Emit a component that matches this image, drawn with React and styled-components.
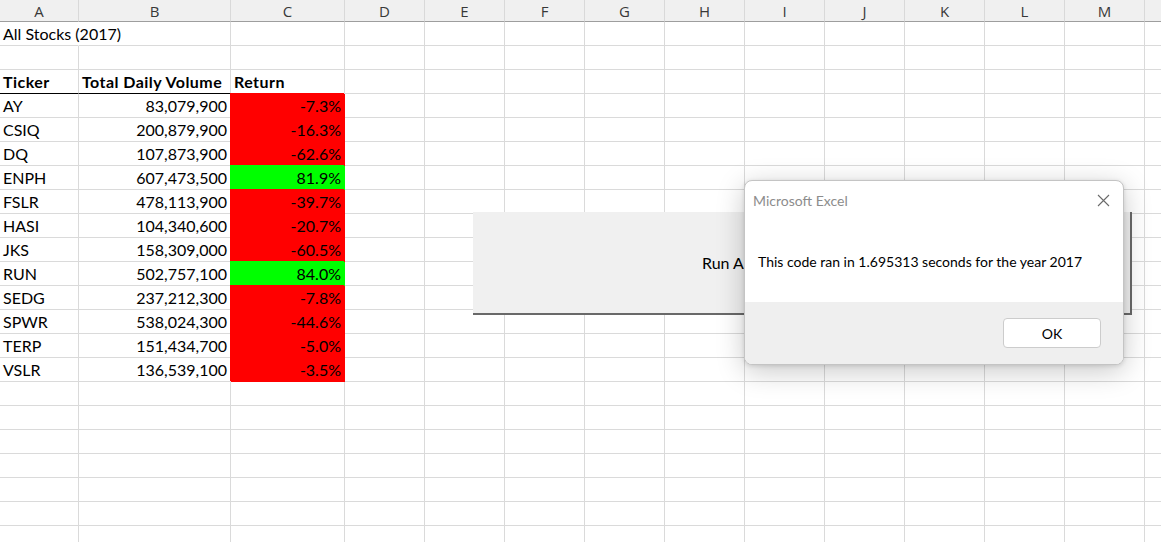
import React from 'react';
import styled, { createGlobalStyle } from 'styled-components';

const GlobalStyle = createGlobalStyle`
  html, body {
    margin: 0;
    padding: 0;
    background: #ffffff;
  }
  body {
    font-family: 'Lato', 'Liberation Sans', sans-serif;
  }
`;

// column widths include the 1px grid line on the right
const COLS = [
  { name: 'A', width: 79 },
  { name: 'B', width: 152 },
  { name: 'C', width: 114 },
  { name: 'D', width: 80 },
  { name: 'E', width: 80 },
  { name: 'F', width: 80 },
  { name: 'G', width: 80 },
  { name: 'H', width: 80 },
  { name: 'I', width: 80 },
  { name: 'J', width: 80 },
  { name: 'K', width: 80 },
  { name: 'L', width: 80 },
  { name: 'M', width: 80 },
  { name: '', width: 40 },
];

const RED = '#ff0000';
const GREEN = '#00ff00';

const stocks = [
  { ticker: 'AY', volume: '83,079,900', ret: '-7.3%' },
  { ticker: 'CSIQ', volume: '200,879,900', ret: '-16.3%' },
  { ticker: 'DQ', volume: '107,873,900', ret: '-62.6%' },
  { ticker: 'ENPH', volume: '607,473,500', ret: '81.9%' },
  { ticker: 'FSLR', volume: '478,113,900', ret: '-39.7%' },
  { ticker: 'HASI', volume: '104,340,600', ret: '-20.7%' },
  { ticker: 'JKS', volume: '158,309,000', ret: '-60.5%' },
  { ticker: 'RUN', volume: '502,757,100', ret: '84.0%' },
  { ticker: 'SEDG', volume: '237,212,300', ret: '-7.8%' },
  { ticker: 'SPWR', volume: '538,024,300', ret: '-44.6%' },
  { ticker: 'TERP', volume: '151,434,700', ret: '-5.0%' },
  { ticker: 'VSLR', volume: '136,539,100', ret: '-3.5%' },
];

const Page = styled.div`
  position: relative;
  width: 1161px;
  height: 542px;
  overflow: hidden;
  background: #ffffff;
`;

const Sheet = styled.div`
  display: grid;
  grid-template-columns: ${COLS.map((c) => `${c.width}px`).join(' ')};
  grid-auto-rows: 24px;
  grid-template-rows: 22px;
`;

const ColHeader = styled.div`
  background: #f0f0f0;
  border-right: 1px solid #d9d9d9;
  border-bottom: 1px solid #9e9e9e;
  display: flex;
  align-items: center;
  justify-content: center;
  font-family: 'Open Sans', 'Liberation Sans', sans-serif;
  font-size: 15px;
  line-height: 20px;
  color: #383838;
`;

const Cell = styled.div`
  position: relative;
  border-right: 1px solid ${(p) => (p.$fill ? p.$fill : p.$noRight ? 'transparent' : '#dadada')};
  border-bottom: 1px solid ${(p) => (p.$fill ? p.$fill : p.$underline ? '#000000' : '#dadada')};
  background: ${(p) => p.$fill || 'transparent'};
  box-shadow: ${(p) => (p.$fill ? `-1px -1px 0 0 ${p.$fill}` : 'none')};
  display: flex;
  align-items: flex-end;
  justify-content: ${(p) => (p.$align === 'right' ? 'flex-end' : 'flex-start')};
  padding: 0 3px 2px 3px;
  box-sizing: border-box;
  font-size: 16px;
  font-weight: ${(p) => (p.$bold ? 700 : 400)};
  letter-spacing: ${(p) => (p.$bold ? '0.45px' : '0')};
  color: #000000;
  white-space: nowrap;
  overflow: visible;
  z-index: ${(p) => (p.$fill ? 1 : 0)};
`;

const ShapeButton = styled.div`
  position: absolute;
  left: 473px;
  top: 212px;
  width: 659px;
  height: 103px;
  box-sizing: border-box;
  background: #f0f0f0;
  border-right: 2px solid #696969;
  border-bottom: 2px solid #696969;
  display: flex;
  align-items: center;
  padding-left: 229px;
  font-family: 'Lato', 'Liberation Sans', sans-serif;
  font-size: 16px;
  color: #000000;
  white-space: nowrap;
  overflow: hidden;
  z-index: 2;
`;

const Dialog = styled.div`
  position: absolute;
  left: 744px;
  top: 180px;
  width: 380px;
  height: 185px;
  box-sizing: border-box;
  border: 1px solid #c4c4c4;
  border-radius: 8px;
  background: #ffffff;
  box-shadow: 0 6px 28px rgba(0, 0, 0, 0.22), 0 1px 4px rgba(0, 0, 0, 0.12);
  display: flex;
  flex-direction: column;
  overflow: hidden;
  z-index: 3;
  font-family: 'Lato', 'Liberation Sans', sans-serif;
`;

const TitleBar = styled.div`
  height: 39px;
  display: flex;
  align-items: center;
  justify-content: space-between;
  padding: 0 12px 0 8px;
`;

const Title = styled.span`
  font-size: 14px;
  color: #8c8c8c;
  margin-top: -1px;
`;

const CloseButton = styled.button`
  width: 16px;
  height: 16px;
  padding: 0;
  border: none;
  background: none;
  display: flex;
  align-items: center;
  justify-content: center;
  cursor: pointer;
`;

const Body = styled.div`
  flex: 1;
  display: flex;
  align-items: center;
  padding-left: 13px;
  font-size: 14px;
  color: #000000;
`;

const Footer = styled.div`
  height: 62px;
  background: #efefef;
  display: flex;
  align-items: center;
  justify-content: flex-end;
  padding-right: 22px;
`;

const OkButton = styled.button`
  width: 98px;
  height: 30px;
  box-sizing: border-box;
  border: 1px solid #cccccc;
  border-radius: 4px;
  background: #ffffff;
  font-family: 'Lato', 'Liberation Sans', sans-serif;
  font-size: 14px;
  color: #000000;
  cursor: pointer;
`;

const TOTAL_ROWS = 22;

const buildRow = (index) => {
  if (index === 0) return { cells: { 0: { text: 'All Stocks (2017)', noRight: true } } };
  if (index === 2)
    return {
      cells: {
        0: { text: 'Ticker', bold: true, underline: true },
        1: { text: 'Total Daily Volume', bold: true, underline: true },
        2: { text: 'Return', bold: true },
      },
    };
  const stock = stocks[index - 3];
  if (stock) {
    const positive = !stock.ret.startsWith('-');
    return {
      cells: {
        0: { text: stock.ticker },
        1: { text: stock.volume, align: 'right' },
        2: { text: stock.ret, align: 'right', fill: positive ? GREEN : RED },
      },
    };
  }
  return { cells: {} };
};

const App = () => {
  const rows = Array.from({ length: TOTAL_ROWS }, (_, i) => buildRow(i));

  return (
    <Page>
      <GlobalStyle />
      <Sheet>
        {COLS.map((col, i) => (
          <ColHeader key={`h${i}`}>{col.name}</ColHeader>
        ))}
        {rows.map((row, r) =>
          COLS.map((col, c) => {
            const cell = row.cells[c] || {};
            return (
              <Cell
                key={`${r}-${c}`}
                $align={cell.align}
                $bold={cell.bold}
                $fill={cell.fill}
                $underline={cell.underline}
                $noRight={cell.noRight}
              >
                {cell.text}
              </Cell>
            );
          })
        )}
      </Sheet>

      <ShapeButton>Run All</ShapeButton>

      <Dialog>
        <TitleBar>
          <Title>Microsoft Excel</Title>
          <CloseButton aria-label="Close">
            <svg width="13" height="13" viewBox="0 0 13 13">
              <path d="M1 1 L12 12 M12 1 L1 12" stroke="#6b6b6b" strokeWidth="1.1" fill="none" />
            </svg>
          </CloseButton>
        </TitleBar>
        <Body>This code ran in 1.695313 seconds for the year 2017</Body>
        <Footer>
          <OkButton>OK</OkButton>
        </Footer>
      </Dialog>
    </Page>
  );
};

export default App;
